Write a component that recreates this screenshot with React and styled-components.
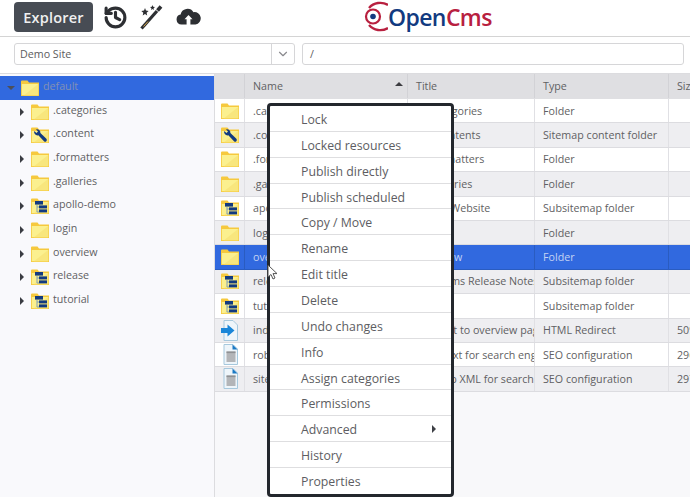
import React from 'react';
import styled, { createGlobalStyle } from 'styled-components';
import { History, ChevronDown } from 'lucide-react';

const Global = createGlobalStyle`
  html, body { margin: 0; padding: 0; width: 690px; height: 497px; overflow: hidden; background: #fff; }
  body { font-family: "Open Sans", "Liberation Sans", sans-serif; }
`;

const Page = styled.div`
  position: relative; width: 690px; height: 497px; overflow: hidden;
  display: flex; flex-direction: column; font-size: 12px; color: #5a5a5e;
`;
const Toolbar = styled.header`
  flex: none; position: relative; display: flex; align-items: flex-start;
  padding: 2px 0 0 14px; height: 34px; border-bottom: 1px solid #d4d4d4; background: #fff;
`;
const ExplorerButton = styled.button`
  width: 79px; height: 30px; border: 0; border-radius: 4px; background: #474c54; color: #f0f0f0;
  font: 600 14.5px "Open Sans", sans-serif; letter-spacing: .2px; padding: 0;
`;
const ToolIcon = styled.span`
  display: flex; width: ${p => p.$w}px; height: 30px; align-items: center; justify-content: center;
  margin-left: ${p => p.$ml}px; color: #2d2f33;
`;
const LogoWrap = styled.div`
  position: absolute; left: 364px; top: 1px; display: flex; align-items: center; height: 31px;
`;
const LogoText = styled.span`
  font: 600 23px/30px "Open Sans", sans-serif; letter-spacing: -.6px; color: ${p => p.$c};
`;
const AddressBar = styled.div`
  height: 37px; flex: none; box-sizing: border-box; display: flex; gap: 7px; padding: 6px 6px 0 14px;
  background: #fff; border-bottom: 1px solid #dcdcdf;
`;
const SiteSelect = styled.div`
  width: 281px; height: 22px; box-sizing: border-box; border: 1px solid #d6d6d8; border-radius: 3px;
  display: flex; align-items: center; padding-left: 5px; color: #5c5c60; font-size: 10.7px;
`;
const SelectLabel = styled.span`flex: 1;`;
const SelectArrow = styled.span`
  width: 22px; height: 100%; border-left: 1px solid #d6d6d8; display: flex; align-items: center; justify-content: center; color: #8a8a8e;
`;
const PathInput = styled.div`
  flex: 1; height: 22px; box-sizing: border-box; border: 1px solid #d6d6d8; border-radius: 3px; padding-left: 7px;
  line-height: 20px; color: #5c5c60; font-size: 10.7px;
`;
const Main = styled.div`flex: 1; display: flex; min-height: 0;`;
const Tree = styled.nav`
  width: 215px; flex: none; box-sizing: border-box; padding-top: 2px; background: #f9f9fc; border-right: 1px solid #dcdcdf;
`;
const TreeRow = styled.div`
  height: 23.7px; display: flex; align-items: center; box-sizing: border-box;
  padding-left: ${p => p.$root ? 7 : 19}px;
  background: ${p => p.$selected ? '#3169df' : 'transparent'};
  color: ${p => p.$selected ? '#8290b4' : '#5f5f63'};
  font-size: 10.7px;
`;
const Caret = styled.span`
  width: 0; height: 0; flex: none; margin-right: ${p => p.$open ? 6 : 7}px;
  ${p => p.$open
    ? 'border-left: 4px solid transparent; border-right: 4px solid transparent; border-top: 4px solid #4d4f59;'
    : 'margin-left: 1px; border-top: 4px solid transparent; border-bottom: 4px solid transparent; border-left: 4px solid #3a3c42;'}
`;
const TreeLabel = styled.span`margin-left: 4px; margin-bottom: 4px;`;
const TableArea = styled.section`flex: 1; min-width: 0; background: #f8f8fa; overflow: hidden;`;
const GridRow = styled.div`
  display: grid; grid-template-columns: 30px 163px 127px 134px 60px; width: 514px;
  height: ${p => p.$head ? 25 : 24.4}px; box-sizing: border-box;
  background: ${p => p.$head ? '#dfdfe2' : p.$selected ? '#3169df' : p.$alt ? '#eeeef1' : '#fff'};
  color: ${p => p.$selected ? '#c3d3f3' : '#5f5f63'};
  border-bottom: 1px solid ${p => p.$head ? '#dfdfe2' : p.$selected ? '#2a5cc0' : '#dcdce0'};
  font-size: 10.7px;
`;
const Cell = styled.div`
  position: relative; display: flex; align-items: center; overflow: hidden; white-space: nowrap;
  padding-left: ${p => p.$icon ? 0 : 8}px; justify-content: ${p => p.$icon ? 'center' : 'flex-start'};
  border-right: 1px solid ${p => p.$selected ? '#2a5cc0' : p.$head ? '#d2d2d6' : '#e0e0e4'};
`;
const SortMark = styled.span`
  position: absolute; right: 4px; top: 8px; width: 0; height: 0;
  border-left: 4px solid transparent; border-right: 4px solid transparent; border-bottom: 4px solid #3c3c40;
`;
const Menu = styled.ul`
  position: absolute; left: 267px; top: 103px; width: 187px; box-sizing: border-box; margin: 0; padding: 0;
  list-style: none; background: #fff; border: 3px solid #23272d; border-radius: 4px;
`;
const MenuItem = styled.li`
  position: relative; height: 25.86px; box-sizing: border-box; padding: 2px 0 0 31px; display: flex; align-items: center;
  font-size: 12.3px; color: #5d5d62; border-bottom: ${p => p.$last ? 0 : '1px solid #dedee0'};
`;
const SubArrow = styled.span`
  position: absolute; right: 15px; top: 9px; width: 0; height: 0;
  border-top: 4px solid transparent; border-bottom: 4px solid transparent; border-left: 4px solid #3e4046;
`;
const Cursor = styled.svg`position: absolute; left: 267px; top: 264px;`;

const FolderBase = ({ w = 18, children }) => (
  <svg width={w} height={w * 16 / 18} viewBox="0 0 18 16">
    <path d="M0 1.5 Q0 .5 1 .5H6.5L8 2.5H18V16H0Z" fill="#f6c93e" />
    <path d="M.8 4H17.2V15.2H.8Z" fill="#fbf08f" />
    <path d="M17.2 4V15.2H3Z" fill="#f8e67d" />
    {children}
  </svg>
);
const Wrench = () => (
  <path d="M5 2.5 a3.4 3.4 0 0 1 4.4 3.6 L15.4 11.8 a1.7 1.7 0 0 1-2.4 2.4 L7.3 8.3 a3.4 3.4 0 0 1-4-4.4 L5.4 6 7 4.5Z" fill="#123a80" />
);
const Sitemap = () => (
  <g>
    <path d="M6 7v7h2" fill="none" stroke="#7f9fb8" strokeWidth="1" />
    <path d="M6 9h2" fill="none" stroke="#7f9fb8" strokeWidth="1" />
    <rect x="4" y="3" width="8" height="3.6" fill="#123a80" />
    <rect x="8" y="7.4" width="8" height="3" fill="#123a80" />
    <rect x="8" y="11.4" width="8" height="3" fill="#123a80" />
  </g>
);
const PageShape = ({ corner, children }) => (
  <svg width="18" height="21" viewBox="0 0 18 21">
    <path d="M3 .5H12L16.5 5V20.5H3Z" fill="#eef5fa" stroke="#a6c8dd" />
    {corner && <path d="M11.5 .5 16.5 5.5H11.5Z" fill="#1c7ac4" />}
    {children}
  </svg>
);
const Redirect = () => (
  <PageShape>
    <path d="M0 8H6.5V4.5L13.5 10.5 6.5 16.5V13H0Z" fill="#1a86d8" />
  </PageShape>
);
const Doc = () => (
  <PageShape corner>
    <rect x="5.5" y="7.5" width="9" height="10.5" fill="#b3b5b8" />
    <rect x="5.5" y="7.5" width="9" height="1.6" fill="#8f9194" />
  </PageShape>
);
const TypeIcon = ({ t, w }) => {
  if (t === 'content') return <FolderBase w={w}><Wrench /></FolderBase>;
  if (t === 'sitemap') return <FolderBase w={w}><Sitemap /></FolderBase>;
  if (t === 'redirect') return <Redirect />;
  if (t === 'doc') return <Doc />;
  return <FolderBase w={w} />;
};

const WandIcon = () => (
  <svg width="25" height="26" viewBox="0 0 25 26">
    <path d="M1.5 24.5 17 7" stroke="#2d2f33" strokeWidth="3.2" fill="none" />
    <path d="M17.5 6.5 21 2.5" stroke="#2d2f33" strokeWidth="3.6" fill="none" />
    <path d="M3.5 22.5 8 17.5" stroke="#d8a94a" strokeWidth="1" fill="none" />
    <path d="M5 4 6 6.6 8.6 7 6.6 8.7 7.2 11.4 5 10 2.7 11.4 3.3 8.7 1.3 7 4 6.6Z" fill="#2d2f33" />
    <path d="M12.5 1 13.2 2.8 15 3 13.6 4.2 14 6 12.5 5 11 6 11.4 4.2 10 3 11.8 2.8Z" fill="#2d2f33" />
  </svg>
);
const CloudIcon = () => (
  <svg width="25" height="21" viewBox="0 0 25 21">
    <path d="M5.5 17.5 A5 5 0 0 1 4.6 7.6 A7 7 0 0 1 17.5 5.2 A6.2 6.2 0 0 1 19.5 17.5Z" fill="#2d2f33" />
    <path d="M12.5 8 16.5 12.2H14.4V19H10.6V12.2H8.5Z" fill="#fff" />
  </svg>
);
const LogoMark = () => (
  <svg width="24" height="31" viewBox="0 0 24 31">
    <path d="M5 7 A15 15 0 0 1 24 4" fill="none" stroke="#b8203f" strokeWidth="2.4" />
    <path d="M5 24 A15 15 0 0 0 24 27" fill="none" stroke="#b8203f" strokeWidth="2.4" />
    <circle cx="9" cy="15.5" r="7" fill="none" stroke="#b8203f" strokeWidth="2.2" />
    <circle cx="9" cy="15.5" r="2.8" fill="#123a80" />
  </svg>
);

const treeItems = [
  ['.categories', 'folder'], ['.content', 'content'], ['.formatters', 'folder'], ['.galleries', 'folder'],
  ['apollo-demo', 'sitemap'], ['login', 'folder'], ['overview', 'folder'], ['release', 'sitemap'], ['tutorial', 'sitemap'],
];
const rows = [
  ['folder', '.categories', 'All categories', 'Folder', ''],
  ['content', '.content', 'Site contents', 'Sitemap content folder', ''],
  ['folder', '.formatters', 'All formatters', 'Folder', ''],
  ['folder', '.galleries', 'All galleries', 'Folder', ''],
  ['sitemap', 'apollo-demo', 'Apollo Website', 'Subsitemap folder', ''],
  ['folder', 'login', '', 'Folder', ''],
  ['folder', 'overview', 'Overview', 'Folder', ''],
  ['sitemap', 'release', 'OpenCms Release Notes', 'Subsitemap folder', ''],
  ['sitemap', 'tutorial', '', 'Subsitemap folder', ''],
  ['redirect', 'index.html', 'Redirect to overview page', 'HTML Redirect', '509 b'],
  ['doc', 'robots.txt', 'Plain text for search engines', 'SEO configuration', '296 b'],
  ['doc', 'sitemap.xml', 'Sitemap XML for search', 'SEO configuration', '297 b'],
];
const menuItems = ['Lock', 'Locked resources', 'Publish directly', 'Publish scheduled', 'Copy / Move', 'Rename', 'Edit title', 'Delete', 'Undo changes', 'Info', 'Assign categories', 'Permissions', 'Advanced', 'History', 'Properties'];

export default function App() {
  return (
    <Page>
      <Global />
      <Toolbar>
        <ExplorerButton>Explorer</ExplorerButton>
        <ToolIcon $w={25} $ml={10}><History size={25} strokeWidth={3} /></ToolIcon>
        <ToolIcon $w={25} $ml={12}><WandIcon /></ToolIcon>
        <ToolIcon $w={25} $ml={11}><CloudIcon /></ToolIcon>
        <LogoWrap>
          <LogoMark />
          <LogoText $c="#123a80">Open</LogoText>
          <LogoText $c="#b8203f">Cms</LogoText>
        </LogoWrap>
      </Toolbar>
      <AddressBar>
        <SiteSelect>
          <SelectLabel>Demo Site</SelectLabel>
          <SelectArrow><ChevronDown size={14} /></SelectArrow>
        </SiteSelect>
        <PathInput>/</PathInput>
      </AddressBar>
      <Main>
        <Tree>
          <TreeRow $root $selected>
            <Caret $open />
            <FolderBase />
            <TreeLabel>default</TreeLabel>
          </TreeRow>
          {treeItems.map(([name, t]) => (
            <TreeRow key={name}>
              <Caret />
              <TypeIcon t={t} />
              <TreeLabel>{name}</TreeLabel>
            </TreeRow>
          ))}
        </Tree>
        <TableArea>
          <GridRow $head>
            <Cell $icon $head />
            <Cell $head>Name<SortMark /></Cell>
            <Cell $head>Title</Cell>
            <Cell $head>Type</Cell>
            <Cell $head>Size</Cell>
          </GridRow>
          {rows.map(([t, name, title, type, size], i) => {
            const sel = name === 'overview';
            return (
              <GridRow key={name} $alt={i % 2 === 1} $selected={sel}>
                <Cell $icon $selected={sel}><TypeIcon t={t} /></Cell>
                <Cell $selected={sel}>{name}</Cell>
                <Cell $selected={sel}>{title}</Cell>
                <Cell $selected={sel}>{type}</Cell>
                <Cell $selected={sel}>{size}</Cell>
              </GridRow>
            );
          })}
        </TableArea>
      </Main>
      <Menu>
        {menuItems.map((m, i) => (
          <MenuItem key={m} $last={i === menuItems.length - 1}>
            {m}
            {m === 'Advanced' && <SubArrow />}
          </MenuItem>
        ))}
      </Menu>
      <Cursor width="11" height="16" viewBox="0 0 11 16">
        <path d="M1 1V13L4 10.5 6 15 8 14 6 9.6H10Z" fill="#fff" stroke="#555" strokeWidth="1" />
      </Cursor>
    </Page>
  );
}
